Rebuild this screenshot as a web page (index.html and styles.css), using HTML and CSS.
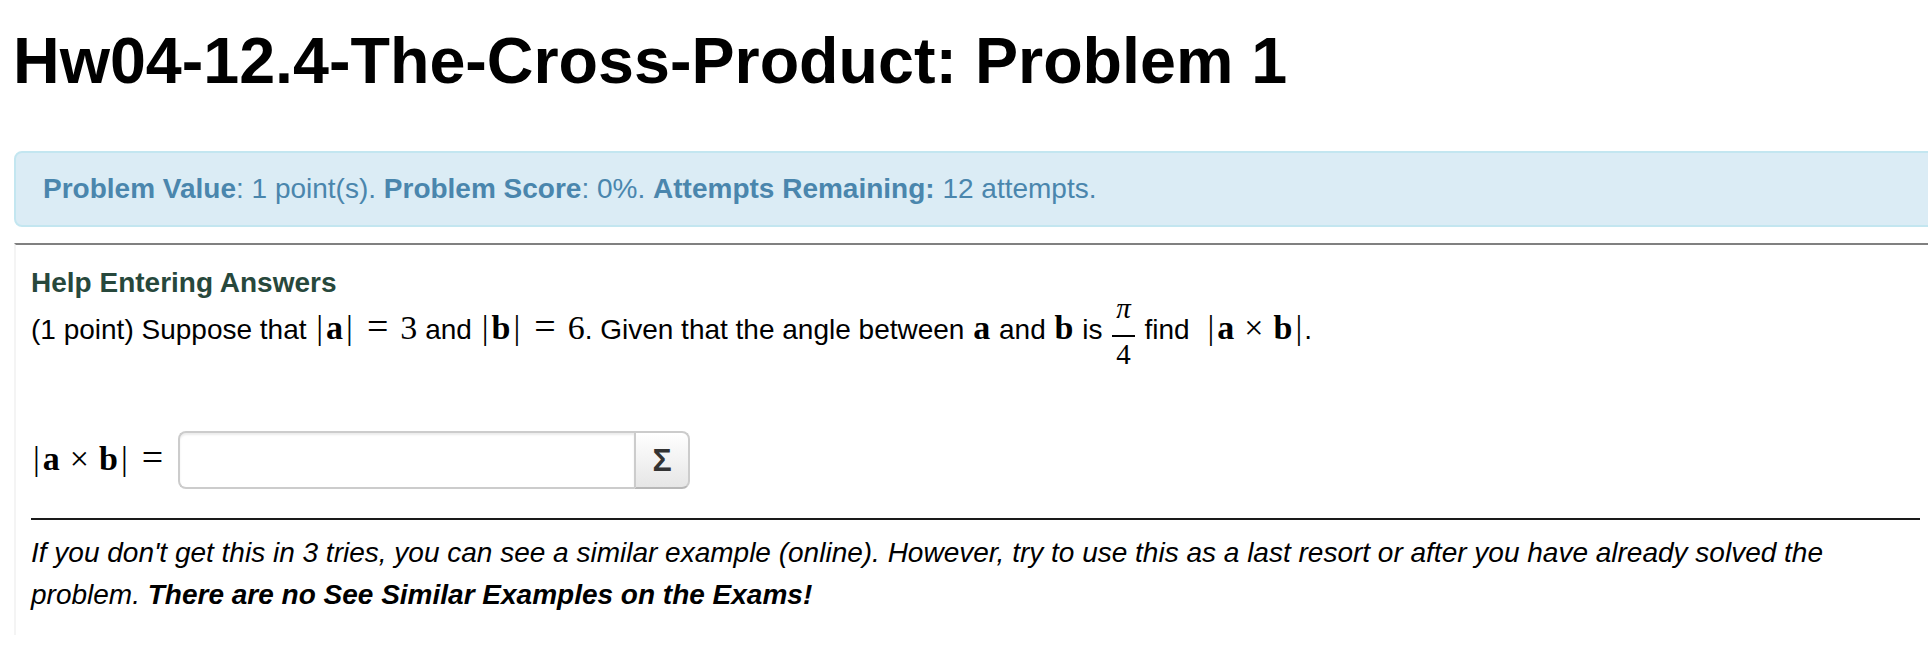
FILE: index.html
```html
<!DOCTYPE html>
<html lang="en">
<head>
<meta charset="utf-8">
<title>Hw04-12.4-The-Cross-Product: Problem 1</title>
<link rel="stylesheet" href="styles.css">
</head>
<body>
<div class="page">
  <h1 class="title">Hw04-12.4-The-Cross-Product: Problem 1</h1>
  <div class="alert">
    <b>Problem Value</b>: 1 point(s). <b>Problem Score</b>: 0%. <b>Attempts Remaining:</b> 12 attempts.
  </div>
  <div class="problem">
    <div class="help">Help Entering Answers</div>
    <p class="statement">(1 point) Suppose that <span class="m"><span class="vb">|</span><b>a</b><span class="vb">|</span><span class="rel">=</span>3</span> and <span class="m"><span class="vb">|</span><b>b</b><span class="vb">|</span><span class="rel">=</span>6</span>. Given that the angle between <span class="m"><b>a</b></span> and <span class="m"><b>b</b></span> is <span class="m frac"><span class="num">π</span><span class="den">4</span></span> find <span class="m gap"><span class="vb">|</span><b>a</b><span class="bin">×</span><b>b</b><span class="vb">|</span></span>.</p>
    <div class="answer">
      <span class="m label"><span class="vb">|</span><b>a</b><span class="bin">×</span><b>b</b><span class="vb">|</span><span class="rel">=</span></span>
      <div class="field">
        <input class="ans" type="text" aria-label="answer">
        <button class="sum" type="button">Σ</button>
      </div>
    </div>
    <hr class="rule">
    <p class="note">If you don't get this in 3 tries, you can see a similar example (online). However, try to use this as a last resort or after you have already solved the problem. <b>There are no See Similar Examples on the Exams!</b></p>
  </div>
</div>
</body>
</html>
```

FILE: styles.css
```css
html, body {
  margin: 0;
  padding: 0;
  background: #ffffff;
  overflow: hidden;
}

body {
  font-family: "Liberation Sans", Arial, Helvetica, sans-serif;
  font-size: 28px;
  line-height: 40px;
  color: #000000;
}

.page {
  width: 1926px;
  margin-left: 14px;
}

.title {
  font-size: 64.6px;
  line-height: 74px;
  font-weight: bold;
  margin: 24px 0 0 -1px;
  color: #000000;
}

.alert {
  margin-top: 53px;
  border: 2px solid #c3e6f0;
  background: #dbecf5;
  color: #4a86ad;
  padding: 16px 70px 16px 27px;
  border-radius: 8px;
}

.alert b {
  font-weight: bold;
}

.problem {
  margin-top: 16px;
  border-top: 2px solid #808080;
  border-left: 2px solid #f4f4f4;
  padding: 20px 20px 19px 15px;
}

.help {
  font-weight: bold;
  line-height: 36px;
  color: #27483c;
}

.statement {
  margin: 0;
  line-height: 40px;
}

.m {
  font-family: "Liberation Serif", "Times New Roman", serif;
  font-size: 34px;
}

.m b {
  font-weight: bold;
  margin: 0 1px;
}

.gap {
  margin-left: 8px;
}

.vb {
  font-weight: normal;
  margin: 0 2px;
}

.rel {
  font-size: 38px;
  margin: 0 12px;
}

.bin {
  margin: 0 9px;
}

.frac {
  display: inline-block;
  vertical-align: -25px;
  text-align: center;
  font-size: 29px;
  margin: 0 2px;
}

.num {
  display: block;
  line-height: 14px;
  padding: 0 4px;
  margin-bottom: 20px;
  font-style: italic;
}

.den {
  display: block;
  line-height: 14px;
  border-top: 2px solid #000000;
  padding: 10px 4px 0 4px;
}

.answer {
  margin-top: 70px;
  display: flex;
  align-items: center;
  height: 58px;
}

.label {
  line-height: 40px;
  padding-bottom: 5px;
  margin-right: 3px;
}

.field {
  display: flex;
  height: 58px;
}

.ans {
  box-sizing: border-box;
  width: 456px;
  height: 58px;
  margin: 0;
  border: 2px solid #cccccc;
  border-right: none;
  border-radius: 8px 0 0 8px;
  box-shadow: inset 0 2px 2px rgba(0, 0, 0, 0.075);
  background: #ffffff;
  font-family: "Liberation Sans", Arial, sans-serif;
  font-size: 28px;
  padding: 0 12px;
  outline: none;
}

.sum {
  box-sizing: border-box;
  width: 56px;
  height: 58px;
  margin: 0;
  padding: 0;
  border: 2px solid #cccccc;
  border-bottom-color: #b8b8b8;
  border-radius: 0 8px 8px 0;
  background: linear-gradient(#ffffff, #e6e6e6);
  font-family: "Liberation Sans", Arial, sans-serif;
  font-weight: bold;
  font-size: 32px;
  color: #333333;
  line-height: 54px;
}

.rule {
  margin: 29px 0 0 0;
  border: none;
  border-top: 2px solid #1a1a1a;
  height: 0;
}

.note {
  margin: 12px 0 0 0;
  max-width: 1860px;
  font-style: italic;
  line-height: 42px;
}

.note b {
  font-weight: bold;
}
```
